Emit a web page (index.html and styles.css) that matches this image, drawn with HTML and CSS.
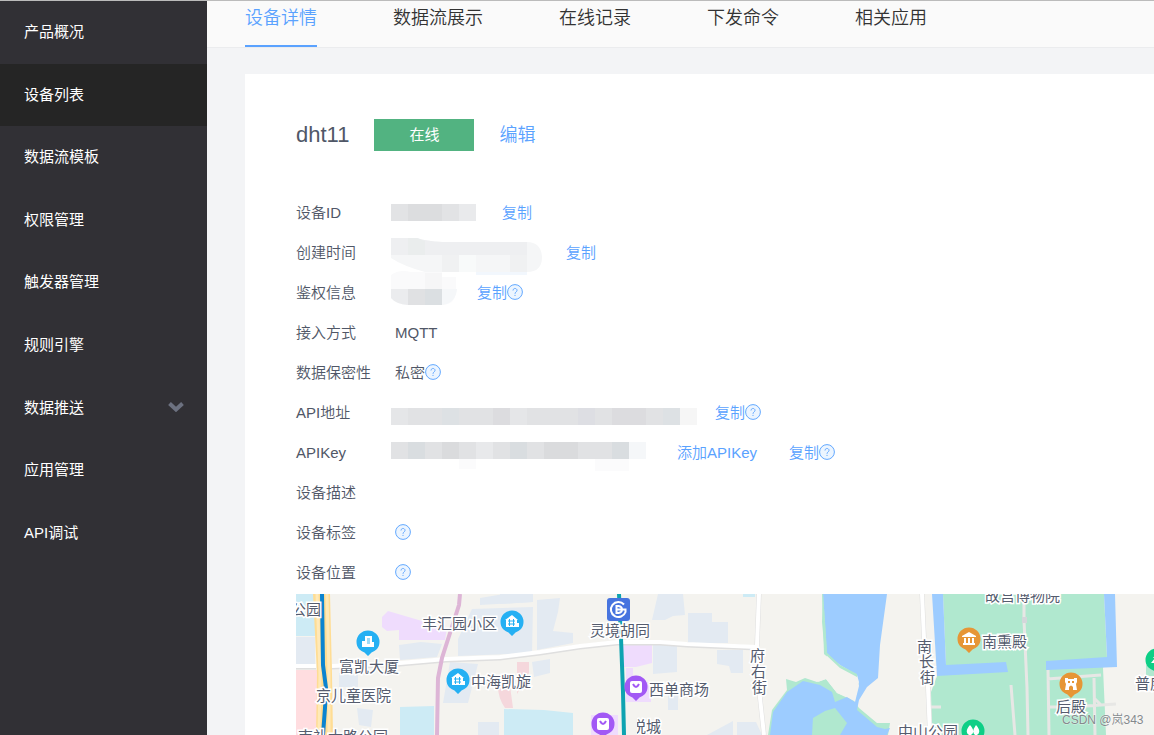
FILE: index.html
```html
<!DOCTYPE html>
<html lang="zh-CN">
  <head>
    <meta charset="UTF-8" />
    <meta name="viewport" content="width=device-width, initial-scale=1.0" />
    <title>设备详情</title>
    <link rel="stylesheet" href="styles.css">
  </head>
  <body>
    <!-- Left menu -->
    <aside class="sidebar">
      <nav class="menu">
        <a href="#">产品概况</a>
        <a href="#" class="active">设备列表</a>
        <a href="#">数据流模板</a>
        <a href="#">权限管理</a>
        <a href="#">触发器管理</a>
        <a href="#">规则引擎</a>
        <a href="#">数据推送
          <svg class="arrow" width="16" height="10" viewBox="0 0 16 10"><path d="M1.5 1.5 8 7.5 14.5 1.5" /></svg>
        </a>
        <a href="#">应用管理</a>
        <a href="#">API调试</a>
      </nav>
    </aside>

    <div class="main">
      <nav class="tabs">
        <a href="#" class="active">设备详情</a>
        <a href="#">数据流展示</a>
        <a href="#">在线记录</a>
        <a href="#">下发命令</a>
        <a href="#">相关应用</a>
      </nav>

      <section class="card">
        <svg width="0" height="0" class="defs">
          <defs>
            <symbol id="help" viewBox="0 0 16 16">
              <circle cx="8" cy="8" r="7.4" fill="#ecf5ff" stroke="#62a8ff" />
              <path d="M6 6.5C6 3.8 10 3.8 10 6.4 10 7.9 8 8 8 9.8M8 10.9V12" fill="none" stroke="#62a8ff" />
            </symbol>
          </defs>
        </svg>

        <div class="title">
          <h1>dht11</h1>
          <span class="status">在线</span>
          <a href="#">编辑</a>
        </div>

        <dl class="info">
          <div class="row">
            <dt>设备ID</dt>
            <dd>
              <svg class="mask" width="91" height="40">
                <path fill="#e2e3e5" d="M0 11h17v17H0z" />
                <path fill="#dcdddf" d="M17 11h34v17H17z" />
                <path fill="#e2e3e5" d="M51 11h17v17H51z" />
                <path fill="#e9eaec" d="M68 11h17v17H68z" />
              </svg>
              <button type="button">复制</button>
            </dd>
          </div>
          <div class="row">
            <dt>创建时间</dt>
            <dd>
              <svg class="mask" width="155" height="40">
                <path fill="#f5f6f7" d="M0 5h26q8 3 26 4h84q14 0 15 15 0 15-15 15H34Q12 33 0 25z" />
                <path fill="#eeeff1" d="M0 5h26q8 3 26 4h84v13H0z" />
                <path fill="#eaeded" d="M17 5h9q5 2 8 3v14H17z" />
                <path fill="#f0f1f2" d="M51 22h17v17H51zM119 22h17v17h-17z" />
                <path fill="#f8fafa" d="M68 22h17v17H68z" />
                <path fill="#f2f7fd" d="M85 39h51v3H85z" />
              </svg>
              <button type="button">复制</button>
            </dd>
          </div>
          <div class="row">
            <dt>鉴权信息</dt>
            <dd>
              <svg class="mask" width="66" height="40">
                <path fill="#fafafb" d="M0 2Q8-4 20-1h31v5h14v13q-1 15-14 15H17Q6 32 0 25z" />
                <path fill="#f6f6f7" d="M34 0h17v16H34z" />
                <path fill="#ebecee" d="M0 16h17v16Q5 31 0 25z" />
                <path fill="#e0e1e3" d="M17 16h17v16H17z" />
                <path fill="#dbdfe2" d="M34 16h17v16H34z" />
                <path fill="#f5f7f9" d="M51 16h15q-1 14-15 16z" />
              </svg>
              <button type="button">复制</button><svg class="help"><use href="#help" /></svg>
            </dd>
          </div>
          <div class="row">
            <dt>接入方式</dt>
            <dd class="text">MQTT</dd>
          </div>
          <div class="row">
            <dt>数据保密性</dt>
            <dd class="text">私密<svg class="help"><use href="#help" /></svg></dd>
          </div>
          <div class="row">
            <dt>API地址</dt>
            <dd>
              <svg class="mask" width="304" height="40">
                <path fill="#e1e2e4" d="M0 15h289v17H0z" />
                <path fill="#e5e6e8" d="M0 15h17v17H0zM119 15h17v17h-17z" />
                <path fill="#dde1e4" d="M51 15h17v17H51zM272 15h17v17h-17z" />
                <path fill="#dcdcdf" d="M102 15h17v17h-17zM221 15h34v17h-34z" />
                <path fill="#dddee3" d="M187 15h17v17h-17z" />
                <path fill="#f6f6f6" d="M289 15h17v17h-17z" />
              </svg>
              <button type="button">复制</button><svg class="help"><use href="#help" /></svg>
            </dd>
          </div>
          <div class="row">
            <dt>APIKey</dt>
            <dd>
              <svg class="mask" width="266" height="40">
                <path fill="#e1e2e4" d="M0 9h238v17H0z" />
                <path fill="#d9dde0" d="M17 9h17v17H17zM119 9h17v17h-17zM221 9h17v17h-17z" />
                <path fill="#dadbdd" d="M51 9h17v17H51zM153 9h34v17h-34z" />
                <path fill="#e8e9eb" d="M85 9h17v17H85z" />
                <path fill="#f5f7f9" d="M238 9h17v17h-17z" />
                <path fill="#fbfbfc" d="M68 26h17v10H68zM204 26h34v12h-34z" />
              </svg>
              <button type="button">添加APIKey</button>
              <button type="button" class="next">复制</button><svg class="help"><use href="#help" /></svg>
            </dd>
          </div>
          <div class="row">
            <dt>设备描述</dt>
            <dd class="text"></dd>
          </div>
          <div class="row">
            <dt>设备标签</dt>
            <dd class="text"><svg class="help"><use href="#help" /></svg></dd>
          </div>
          <div class="row">
            <dt>设备位置</dt>
            <dd class="text"><svg class="help"><use href="#help" /></svg></dd>
          </div>
        </dl>

        <div class="map">
          <svg viewBox="0 0 858 141" preserveAspectRatio="xMinYMin slice">
            <defs>
              <path id="pin" d="M-11.5 0a11.5 11.5 0 1 1 23 0c0 6-4 9-8 10.500L0 14l-3.500-3.500c-4-1.500-8-4.500-8-10.500z" />
              <g id="house">
                <use href="#pin" fill="#25b0f3" />
                <path fill="#fff" d="M-7-2 0-7 6-2H5V1H7V5H-6V-2z" />
                <path stroke="#25b0f3" d="M-4-1H3M-4 2H3M-2.500-3V4M1.500-3V4" />
              </g>
              <g id="shop">
                <use href="#pin" fill="#a259f5" />
                <rect x="-6" y="-6" width="12" height="12" rx="2" fill="#fff" />
                <path d="M-3-3Q0 3 3-3" fill="none" stroke="#a259f5" stroke-width="2" />
              </g>
              <clipPath id="cut"><path d="M341 120h60v30h-60z" /></clipPath>
            </defs>

            <!-- Blocks -->
            <g fill="#e3eaf2">
              <path d="M0 43h19v28H0zM103 51l22-3 21 2-5 13-37 3zM184 4l24-4h28v8l-52 3zM176 15l61-2-1 46-74 3V45zM43 79h19v14H43zM61 114l16 2-2 17-12-2zM154 68l28 2-10 39h-25z" />
              <path d="M204 0h33v8l-33 2zM182 128h21v13h-21zM241 6l23-2-2 14-5 19 20 2v10l-36 7zM236 68l18-3v14l-16 4zM362 0h25l2 21-12 1-8 4h-13z" />
              <path d="M392 19h24v30h-24zM416 28h16v21h-16zM357 51h24v27l-24 2zM372 101h10v15h-10zM421 56h26v23h-12l-2-7-12-2zM411 141l26-14v14zM441 128h19l6 13h-25z" />
            </g>
            <path fill="#cdebf5" d="M0 0h19v42H0zM104 113l34-1v29h-34zM208 115l40 1 29 3v22h-69zM447 0h12v3h-12z" />
            <path fill="#ffdde0" d="M0 76h21v65H0z" />
            <path fill="#f5d7dc" d="M221 68h12v11l-12 21zM202 92h12l3 22h-8q-7-10-7-22z" />
            <path fill="#efdcfd" d="M86 23l6-6 34 10 25 7-2 12h-46V36l-12 1-5-4zM327 50h29v19l-16 4h-13zM330 74h7v14h18v20h-25zM295 121h27v20h-27z" />

            <!-- Park and palace -->
            <path fill="#b0e8cf" d="M647 0h161l3 64-4 10 3 67H636l-1-43 6-16 9-11zM850 71h8v11h-8z" />
            <path fill="#b0e8cf" d="M472 141l4-25 15-20-1-11 10 3 9-4 12 4 9-3 11 14 17 8 5 7 18 15h13l-2 12z" />
            <path fill="#b0e8cf" d="M526 0h6l3 59 30 23-3 9-34-31z" />
            <!-- Lakes and moat -->
            <g fill="#9dccff">
              <path d="M527 0h64l-7 51-2 33-11 9-8 13-2 10 20 17 8 2 5-1-3 7H474l3-23 14-20 16-11 17 4 12 7 3 10 12-5 8 5 4-16-2-11-17-9-13-13-2-31z" />
              <path d="M636 0h11l3 71 60-3 2 10-71 4zM808 0h11l2 73-71 3v-9l61-4z" />
            </g>
            <path fill="#f4f3ef" d="M531 61l13 10 17 10 2 7-4 18-18-7-11-14-8 3z" />
            <path fill="#b0e8cf" d="M527 0l2 28 2 31 13 12 17 9v3l-17-9-15-14-3-32z" />
            <path fill="#b0e8cf" d="M517 124l12-7 10-3 12 15-7 12h-28z" />

            <!-- Roads -->
            <g fill="none" stroke="#dfdfdf" stroke-width="5">
              <path d="M0 73h20M36 73l68-3 46-4 54-2 40-5 40-6 37-4h43l27 2 70 3" />
              <path d="M463 0l-2 51 3 53 4 37M626 0l2 44 4 50 2 47" />
            </g>
            <g fill="none" stroke="#fff" stroke-width="4">
              <path d="M0 72h20M36 72l68-3 46-4 54-2 40-5 40-6 37-4h43l27 2 70 3" />
              <path d="M463 0l-2 51 3 53 4 37M626 0l2 44 4 50 2 47" />
            </g>
            <g fill="none" stroke="#e7e7e5" stroke-width="3">
              <path d="M728 8v18l3 68 1 47M715 91l4 50M752 76l1 65M751 85l54-4M798 84l1 57M753 113h12M790 112l30-2M798 104l7 7M635 113h10" />
            </g>
            <path fill="#d3d7da" d="M726 23h5v6h-5z" />
            <path fill="#ffdd94" d="M17 0h17l2 80 1 61H20l1-61z" />
            <path fill="none" stroke="#ffe9b8" stroke-width="3" d="M21 0l3 80-1 61M31 0l2 80v61" />
            <path fill="none" stroke="#0b84d0" stroke-width="4" d="M26 0l1 71 3 23-1 20-2 27" />
            <path fill="none" stroke="#ddb5d6" stroke-width="4" d="M164 0l-1 11-17 53-4 20-1 57" />
            <path fill="none" stroke="#0ea3b1" stroke-width="4" d="M323 0l2 44 2 54 1 43" />

            <!-- Markers -->
            <g transform="translate(72 48)">
              <use href="#pin" fill="#25b0f3" />
              <path fill="#fff" d="M-6 5V-1H-3V-6H4V0H6V5z" />
              <path fill="#9edbf8" d="M-1-4H2V2H-1z" />
            </g>
            <use href="#house" x="216" y="28" />
            <use href="#house" x="162" y="86" />
            <use href="#shop" x="340" y="93" />
            <use href="#shop" x="307" y="130" />
            <g transform="translate(322.500 15.500)">
              <rect x="-11.500" y="-11.500" width="23" height="23" rx="3" fill="#4774df" />
              <path fill="none" stroke="#fff" stroke-width="2" d="M5.500-5A7.500 7.500 0 1 0 7 2.500V0H-2M-2-3.500V3.500H0Q3.500 3 3.500 0T0-3.500H-3" />
            </g>
            <g transform="translate(673 45)">
              <use href="#pin" fill="#e69636" />
              <path fill="#fff" d="M-7-3 0-7 7-3V-2H-7zM-5-1h2v5h-2zM-1-1h2v5h-2zM3-1h2v5h-2zM-6 4H6V6H-6z" />
            </g>
            <g transform="translate(775 90)">
              <use href="#pin" fill="#e69636" />
              <path fill="#fff" d="M-6-6h3v1h6v-1h3v4l-1 2 1 6H2V3Q0 0-2 3v3h-4l1-6-1-2z" />
              <path fill="#e69636" d="M-3-3h2v2h-2zM1-3h2v2h-2z" />
            </g>
            <g transform="translate(677 137)">
              <use href="#pin" fill="#0dcf86" />
              <path fill="#fff" d="M-3-6q6 7 1 10v4h-2V4q-5-3 1-10zM3-6q6 7 1 10v4H2V4q-4-3 1-10z" />
            </g>
            <g transform="translate(861 66)">
              <use href="#pin" fill="#0dcf86" />
              <path fill="#fff" d="M0-7-4-2h2l-4 5h5v3h2V3h5z" />
            </g>

            <!-- Place names -->
            <g class="names">
              <text x="-5" y="21">公园</text>
              <text x="126" y="35">丰汇园小区</text>
              <text x="43" y="78">富凯大厦</text>
              <text x="20" y="107">京儿童医院</text>
              <text x="2" y="148">南礼士路公园</text>
              <text x="175" y="93">中海凯旋</text>
              <text x="294" y="42">灵境胡同</text>
              <text x="353" y="101">西单商场</text>
              <text x="335" y="138" clip-path="url(#cut)">悦城</text>
              <text><tspan x="454" y="67">府</tspan><tspan x="455" y="83">右</tspan><tspan x="456" y="99">街</tspan></text>
              <text><tspan x="621" y="58">南</tspan><tspan x="623" y="73">长</tspan><tspan x="624" y="89">街</tspan></text>
              <text x="602" y="143">中山公园</text>
              <text x="689" y="7">故宫博物院</text>
              <text x="686" y="53">南熏殿</text>
              <text x="760" y="118">后殿</text>
              <text x="839" y="95">普度寺</text>
            </g>
            <text class="credit" x="766" y="130">CSDN @岚343</text>
          </svg>
        </div>
      </section>
    </div>
  </body>
</html>
```
FILE: styles.css
```css
* {
  box-sizing: border-box;
}

body {
  display: flex;
  height: 100vh;
  margin: 0;
  border-top: 1px solid #bbbbbb;
  overflow: hidden;
  background-color: #f3f4f6;
  color: #505767;
  font-family: "Liberation Sans", "Noto Sans CJK SC", sans-serif;
  font-size: 15px;
}

a {
  color: #5aa2ff;
  text-decoration: none;
}

/* Left menu */
.sidebar {
  flex: none;
  width: 207px;
  background-color: #313035;
}

.menu {
  display: grid;
  grid-auto-rows: 1fr;
  height: 563px;
}

.menu a {
  display: flex;
  align-items: center;
  justify-content: space-between;
  padding: 0 23px 3px 24px;
  color: #fff;
}

.menu .active {
  background-color: #252525;
}

.arrow {
  margin-top: 2px;
  fill: none;
  stroke: #6c7180;
  stroke-width: 4;
}

/* Right side */
.main {
  display: flex;
  flex: 1;
  flex-direction: column;
  min-width: 0;
}

.tabs {
  display: flex;
  flex: none;
  gap: 76px;
  padding-left: 38px;
  border-bottom: 1px solid #ebecee;
  background-color: #fafafa;
}

.tabs a {
  padding-bottom: 10px;
  border-bottom: 2px solid transparent;
  color: #333;
  font-size: 18px;
  font-weight: 350;
  line-height: 34px;
  white-space: nowrap;
}

.tabs .active {
  border-color: #5aa2ff;
  color: #5aa2ff;
}

.card {
  display: flex;
  flex: 1;
  flex-direction: column;
  min-height: 0;
  margin: 26px 0 0 38px;
  padding: 45px 0 0 51px;
  background-color: #fff;
  font-weight: 350;
}

.defs {
  position: absolute;
}

.title {
  display: flex;
  align-items: center;
  gap: 25px;
  height: 32px;
  margin-bottom: 42px;
}

.title h1 {
  margin: 0;
  font-size: 22px;
  font-weight: normal;
}

.title a {
  font-size: 18px;
  line-height: 32px;
}

.status {
  width: 100px;
  background-color: #52b381;
  color: #fff;
  font-weight: normal;
  line-height: 32px;
  text-align: center;
}

/* Device info */
.info {
  flex: none;
  margin: 0 0 1px;
}

.row {
  display: flex;
  height: 40px;
  line-height: 40px;
}

.row dt {
  flex: none;
  width: 95px;
}

.row dd {
  display: flex;
  align-items: center;
  margin: 0;
}

.row .text {
  padding-left: 4px;
}

.row button {
  padding: 0;
  border: none;
  background: none;
  color: #5aa2ff;
  font: inherit;
  cursor: pointer;
}

.mask {
  flex: none;
  margin-right: 20px;
  overflow: visible;
}

.row .next {
  margin-left: 32px;
}

.help {
  width: 16px;
  height: 16px;
  margin-bottom: 2px;
}

/* Map */
.map {
  flex: 1;
  min-height: 0;
  overflow: hidden;
  background-color: #f4f3ef;
}

.map svg {
  display: block;
  width: 100%;
  height: 100%;
}

.names {
  fill: #555c6e;
  stroke: #fff;
  stroke-width: 3px;
  paint-order: stroke;
  font-size: 15px;
  font-weight: 400;
}

.credit {
  fill: #85898c;
  stroke: #ffffff88;
  stroke-width: 1px;
  paint-order: stroke;
  font-size: 12px;
}
```
